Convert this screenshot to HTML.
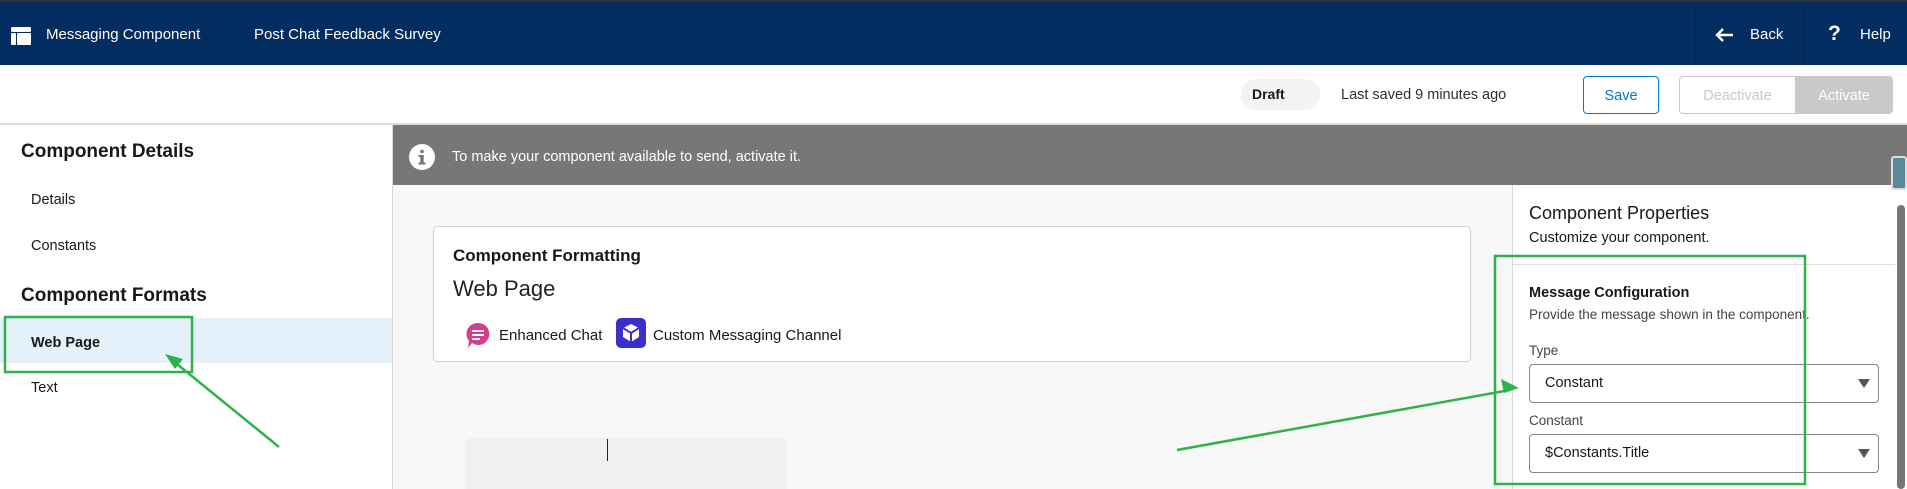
<!DOCTYPE html>
<html><head><meta charset="utf-8"><style>
*{margin:0;padding:0;box-sizing:border-box}
body{width:1907px;height:489px;overflow:hidden;position:relative;font-family:"Liberation Sans",sans-serif;background:#fff;color:#181818}
.a{position:absolute;white-space:nowrap}
</style></head><body>
<div class="a" style="left:0;top:0;width:1907px;height:2px;background:#333"></div>
<div class="a" style="left:0;top:2px;width:1907px;height:63px;background:#032d60"></div>
<div class="a" style="left:233px;top:2px;width:1px;height:63px;background:#0a2450"></div>
<div class="a" style="left:1695px;top:2px;width:1px;height:63px;background:#0a2450"></div>
<div class="a" style="left:1804px;top:2px;width:1px;height:63px;background:#0a2450"></div>
<svg class="a" style="left:11px;top:27px" width="20" height="18" viewBox="0 0 20 18"><rect x="0" y="0" width="20" height="5" rx="1.5" fill="#fff"/><rect x="0" y="6" width="5" height="12" rx="1" fill="#fff"/><rect x="6" y="6" width="14" height="12" rx="1" fill="#fff"/></svg>
<div class="a" style="left:46px;top:26px;font-size:15px;color:#fff">Messaging Component</div>
<div class="a" style="left:254px;top:26px;font-size:15px;color:#fff">Post Chat Feedback Survey</div>
<svg class="a" style="left:1714px;top:27px" width="20" height="16" viewBox="0 0 20 16"><path d="M19 8H3M9 2L3 8l6 6" stroke="#fff" stroke-width="2.4" fill="none"/></svg>
<div class="a" style="left:1750px;top:26px;font-size:15px;color:#fff">Back</div>
<div class="a" style="left:1828px;top:22px;font-size:21px;font-weight:bold;color:#fff">?</div>
<div class="a" style="left:1860px;top:26px;font-size:15px;color:#fff">Help</div>

<div class="a" style="left:1241px;top:79px;width:79px;height:31px;border-radius:15px;background:#f3f3f3;font-size:14px;font-weight:bold;line-height:31px;padding-left:11px">Draft</div>
<div class="a" style="left:1341px;top:87px;font-size:14.5px;color:#2e2e2e">Last saved 9 minutes ago</div>
<div class="a" style="left:1583px;top:76px;width:76px;height:38px;border:1px solid #0176d3;border-radius:4px;color:#0176d3;font-size:14.5px;line-height:38px;text-align:center">Save</div>
<div class="a" style="left:1679px;top:76px;width:214px;height:38px;border:1px solid #c9c9c9;border-radius:4px;overflow:hidden">
<div class="a" style="left:0;top:0;width:115px;height:36px;color:#c9c9c9;font-size:14.5px;line-height:38px;text-align:center">Deactivate</div>
<div class="a" style="left:115px;top:0;width:98px;height:36px;background:#c9c9c9;color:#fff;font-size:14.5px;line-height:38px;text-align:center">Activate</div></div>
<div class="a" style="left:0;top:123px;width:1907px;height:2px;background:#ddd"></div>

<div class="a" style="left:392px;top:125px;width:1px;height:364px;background:#d8d8d8"></div>
<div class="a" style="left:21px;top:141px;font-size:19px;font-weight:bold">Component Details</div>
<div class="a" style="left:31px;top:192px;font-size:14.5px">Details</div>
<div class="a" style="left:31px;top:238px;font-size:14.5px">Constants</div>
<div class="a" style="left:21px;top:285px;font-size:19px;font-weight:bold">Component Formats</div>
<div class="a" style="left:0;top:318px;width:392px;height:45px;background:#e5f1fb"></div>
<div class="a" style="left:31px;top:335px;font-size:14.5px;font-weight:bold">Web Page</div>
<div class="a" style="left:31px;top:380px;font-size:14.5px">Text</div>

<div class="a" style="left:393px;top:125px;width:1514px;height:60px;background:#777"></div>
<svg class="a" style="left:408px;top:143px" width="28" height="28" viewBox="0 0 28 28"><circle cx="14" cy="14" r="13" fill="#fff"/><circle cx="14" cy="8.5" r="1.8" fill="#777"/><rect x="12.3" y="12" width="3.4" height="9" fill="#777"/><rect x="10.5" y="12" width="5" height="2" fill="#777"/><rect x="10.5" y="19.5" width="7" height="2" fill="#777"/></svg>
<div class="a" style="left:452px;top:149px;font-size:14.5px;color:#fff">To make your component available to send, activate it.</div>

<div class="a" style="left:393px;top:185px;width:1119px;height:304px;background:#f8f8f8"></div>
<div class="a" style="left:433px;top:226px;width:1038px;height:136px;background:#fff;border:1px solid #d0d0d0;border-radius:4px"></div>
<div class="a" style="left:453px;top:246px;font-size:17px;font-weight:bold">Component Formatting</div>
<div class="a" style="left:453px;top:276px;font-size:22px;color:#222">Web Page</div>
<svg class="a" style="left:465px;top:321px" width="26" height="30" viewBox="0 0 26 30"><path d="M13 2a11 11 0 1 1-6 20l-4 5 1-7A11 11 0 0 1 13 2z" fill="#d63e8a"/><rect x="7" y="9" width="12" height="2" fill="#fff"/><rect x="7" y="13" width="12" height="2" fill="#fff"/><rect x="7" y="17" width="8" height="2" fill="#fff"/></svg>
<div class="a" style="left:499px;top:327px;font-size:15px">Enhanced Chat</div>
<svg class="a" style="left:616px;top:318px" width="30" height="30" viewBox="0 0 30 30"><rect width="30" height="30" rx="5" fill="#3b2fc9"/><path d="M15 6l8 4v9l-8 5-8-5v-9z" fill="#fff"/><path d="M15 15v9M7 10l8 5 8-5" stroke="#3b2fc9" stroke-width="2" fill="none"/></svg>
<div class="a" style="left:653px;top:327px;font-size:15px">Custom Messaging Channel</div>
<div class="a" style="left:465px;top:438px;width:322px;height:51px;background:#f0f0f0;border-radius:6px 6px 0 0"></div>
<div class="a" style="left:607px;top:439px;width:1px;height:22px;background:#222"></div>

<div class="a" style="left:1512px;top:185px;width:1px;height:304px;background:#d8d8d8"></div>
<div class="a" style="left:1529px;top:203px;font-size:18px;color:#181818">Component Properties</div>
<div class="a" style="left:1529px;top:230px;font-size:14.5px">Customize your component.</div>
<div class="a" style="left:1513px;top:264px;width:382px;height:1px;background:#ddd"></div>
<div class="a" style="left:1529px;top:285px;font-size:14.5px;font-weight:bold">Message Configuration</div>
<div class="a" style="left:1529px;top:307px;font-size:13.5px;color:#444">Provide the message shown in the component.</div>
<div class="a" style="left:1529px;top:343px;font-size:13.5px;color:#444">Type</div>
<div class="a" style="left:1529px;top:364px;width:350px;height:39px;border:1px solid #888;border-radius:4px;font-size:14.5px;line-height:37px;padding-left:15px">Constant</div>
<div class="a" style="left:1858px;top:379px;width:0;height:0;border-left:6px solid transparent;border-right:6px solid transparent;border-top:9px solid #555"></div>
<div class="a" style="left:1529px;top:413px;font-size:13.5px;color:#444">Constant</div>
<div class="a" style="left:1529px;top:434px;width:350px;height:39px;border:1px solid #888;border-radius:4px;font-size:14.5px;line-height:37px;padding-left:15px">$Constants.Title</div>
<div class="a" style="left:1858px;top:449px;width:0;height:0;border-left:6px solid transparent;border-right:6px solid transparent;border-top:9px solid #555"></div>

<div class="a" style="left:1897px;top:205px;width:8px;height:284px;background:#777;border-radius:4px"></div>
<div class="a" style="left:1891px;top:156px;width:16px;height:34px;background:#5a8a9a;border:2px solid #ddd;border-radius:3px"></div>

<svg class="a" style="left:0;top:0" width="1907" height="489">
<g fill="none" stroke="#2fb24a" stroke-width="2.5">
<rect x="5" y="317" width="187" height="55"/>
<rect x="1495" y="256" width="310" height="228"/>
<line x1="279" y1="447" x2="172" y2="360"/>
<line x1="1177" y1="450" x2="1510" y2="390"/>
</g>
<path d="M165 354l18 5-8 10z" fill="#2fb24a"/>
<path d="M1519 388l-18-9 3 14z" fill="#2fb24a"/>
</svg>
</body></html>
